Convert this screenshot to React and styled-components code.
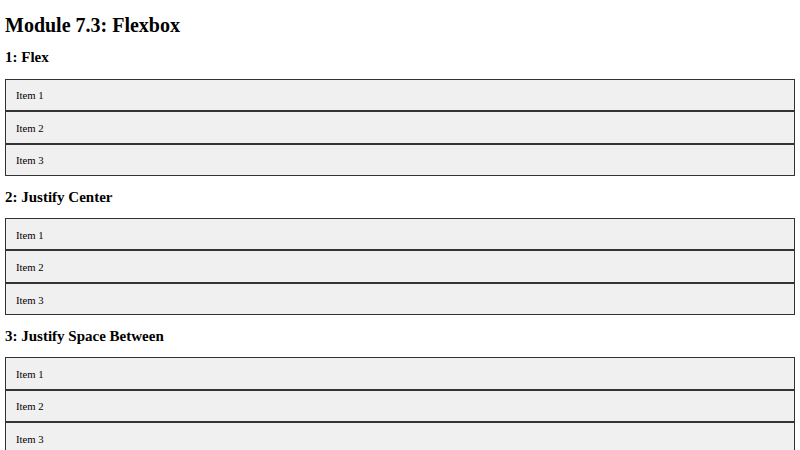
import styled, { createGlobalStyle } from "styled-components";

const GlobalStyle = createGlobalStyle`
  body {
    margin: 0;
    padding: 0 5px;
    font-family: "Liberation Serif", "Times New Roman", serif;
    color: #000;
    background: #fff;
  }
`;

const sections = [
  { title: "1: Flex", items: ["Item 1", "Item 2", "Item 3"] },
  { title: "2: Justify Center", items: ["Item 1", "Item 2", "Item 3"] },
  { title: "3: Justify Space Between", items: ["Item 1", "Item 2", "Item 3"] },
];

export default function App() {
  return (
    <>
      <GlobalStyle />
      <Title>Module 7.3: Flexbox</Title>
      {sections.map((section) => (
        <section key={section.title}>
          <SectionTitle>{section.title}</SectionTitle>
          <FlexList>
            {section.items.map((item) => (
              <Item key={item}>{item}</Item>
            ))}
          </FlexList>
        </section>
      ))}
    </>
  );
}

const Title = styled.h1`
  font-size: 20px;
  font-weight: bold;
  margin: 13.8px 0 12.6px;
`;

const SectionTitle = styled.h2`
  font-size: 15px;
  font-weight: bold;
  margin: 12.6px 0 12.2px;
`;

const FlexList = styled.div`
  display: flex;
  flex-direction: column;
`;

const Item = styled.div`
  background-color: #f0f0f0;
  border: 1px solid #333;
  padding: 9.8px 10px 8.2px;
  font-size: 10.7px;
  line-height: 12.5px;
`;
